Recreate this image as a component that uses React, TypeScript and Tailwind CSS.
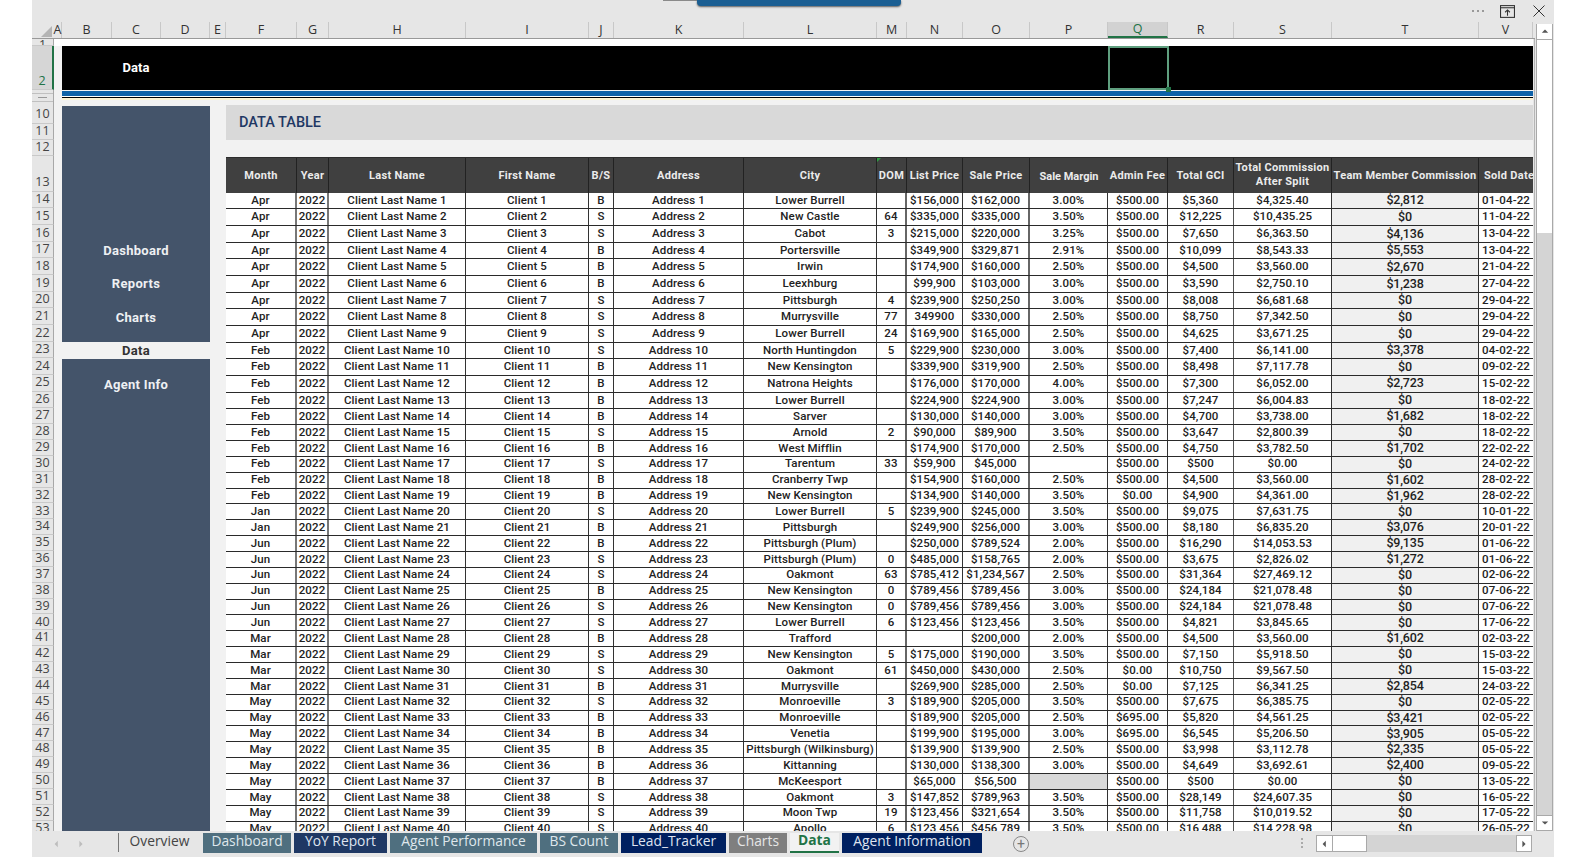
const COLUMNS = [
  { label: 'A', w: 'w-[8px]' },
  { label: 'B', w: 'w-[50px]' },
  { label: 'C', w: 'w-[49px]' },
  { label: 'D', w: 'w-[49px]' },
  { label: 'E', w: 'w-[16px]' },
  { label: 'F', w: 'w-[71px]' },
  { label: 'G', w: 'w-[32px]' },
  { label: 'H', w: 'w-[137px]' },
  { label: 'I', w: 'w-[123px]' },
  { label: 'J', w: 'w-[25px]' },
  { label: 'K', w: 'w-[130px]' },
  { label: 'L', w: 'w-[133px]' },
  { label: 'M', w: 'w-[30px]' },
  { label: 'N', w: 'w-[56px]' },
  { label: 'O', w: 'w-[67px]' },
  { label: 'P', w: 'w-[78px]' },
  { label: 'Q', w: 'w-[60px]' },
  { label: 'R', w: 'w-[66px]' },
  { label: 'S', w: 'w-[98px]' },
  { label: 'T', w: 'w-[147px]' },
  { label: 'V', w: 'w-[54px]' },
]

const ROW_GRID = 'grid grid-cols-[71px_32px_137px_123px_25px_130px_133px_30px_56px_67px_78px_60px_66px_98px_147px_54px]'

// right border of each table column, the gray ones are the doubled lines in the sheet
const CELL_LINES = [
  'border-r-2 border-[#777]',
  'border-r-2 border-[#777]',
  'border-r border-[#333]',
  'border-r border-[#333]',
  'border-r border-[#333]',
  'border-r border-[#333]',
  'border-r border-[#333]',
  'border-r-2 border-[#666]',
  'border-r border-[#333]',
  'border-r-2 border-[#666]',
  'border-r border-[#333]',
  'border-r border-[#333]',
  'border-r border-[#555]',
  'border-r border-[#333]',
  'border-r border-[#333]',
  '',
]

const HEADERS = ['Month', 'Year', 'Last Name', 'First Name', 'B/S', 'Address', 'City', 'DOM', 'List Price', 'Sale Price', 'Sale Margin', 'Admin Fee', 'Total GCI', 'Total Commission', 'Team Member Commission', 'Sold Date']

// month, b/s, city, dom, list, sale, margin, admin, gci, after split, team, date
const ROWS: string[][] = [
  ['Apr', 'B', 'Lower Burrell', '', '$156,000', '$162,000', '3.00%', '$500.00', '$5,360', '$4,325.40', '$2,812', '01-04-22'],
  ['Apr', 'S', 'New Castle', '64', '$335,000', '$335,000', '3.50%', '$500.00', '$12,225', '$10,435.25', '$0', '11-04-22'],
  ['Apr', 'S', 'Cabot', '3', '$215,000', '$220,000', '3.25%', '$500.00', '$7,650', '$6,363.50', '$4,136', '13-04-22'],
  ['Apr', 'B', 'Portersville', '', '$349,900', '$329,871', '2.91%', '$500.00', '$10,099', '$8,543.33', '$5,553', '13-04-22'],
  ['Apr', 'B', 'Irwin', '', '$174,900', '$160,000', '2.50%', '$500.00', '$4,500', '$3,560.00', '$2,670', '21-04-22'],
  ['Apr', 'B', 'Leexhburg', '', '$99,900', '$103,000', '3.00%', '$500.00', '$3,590', '$2,750.10', '$1,238', '27-04-22'],
  ['Apr', 'S', 'Pittsburgh', '4', '$239,900', '$250,250', '3.00%', '$500.00', '$8,008', '$6,681.68', '$0', '29-04-22'],
  ['Apr', 'S', 'Murrysville', '77', '349900', '$330,000', '2.50%', '$500.00', '$8,750', '$7,342.50', '$0', '29-04-22'],
  ['Apr', 'S', 'Lower Burrell', '24', '$169,900', '$165,000', '2.50%', '$500.00', '$4,625', '$3,671.25', '$0', '29-04-22'],
  ['Feb', 'S', 'North Huntingdon', '5', '$229,900', '$230,000', '3.00%', '$500.00', '$7,400', '$6,141.00', '$3,378', '04-02-22'],
  ['Feb', 'B', 'New Kensington', '', '$339,900', '$319,900', '2.50%', '$500.00', '$8,498', '$7,117.78', '$0', '09-02-22'],
  ['Feb', 'B', 'Natrona Heights', '', '$176,000', '$170,000', '4.00%', '$500.00', '$7,300', '$6,052.00', '$2,723', '15-02-22'],
  ['Feb', 'B', 'Lower Burrell', '', '$224,900', '$224,900', '3.00%', '$500.00', '$7,247', '$6,004.83', '$0', '18-02-22'],
  ['Feb', 'B', 'Sarver', '', '$130,000', '$140,000', '3.00%', '$500.00', '$4,700', '$3,738.00', '$1,682', '18-02-22'],
  ['Feb', 'S', 'Arnold', '2', '$90,000', '$89,900', '3.50%', '$500.00', '$3,647', '$2,800.39', '$0', '18-02-22'],
  ['Feb', 'B', 'West Mifflin', '', '$174,900', '$170,000', '2.50%', '$500.00', '$4,750', '$3,782.50', '$1,702', '22-02-22'],
  ['Feb', 'S', 'Tarentum', '33', '$59,900', '$45,000', '', '$500.00', '$500', '$0.00', '$0', '24-02-22'],
  ['Feb', 'B', 'Cranberry Twp', '', '$154,900', '$160,000', '2.50%', '$500.00', '$4,500', '$3,560.00', '$1,602', '28-02-22'],
  ['Feb', 'B', 'New Kensington', '', '$134,900', '$140,000', '3.50%', '$0.00', '$4,900', '$4,361.00', '$1,962', '28-02-22'],
  ['Jan', 'S', 'Lower Burrell', '5', '$239,900', '$245,000', '3.50%', '$500.00', '$9,075', '$7,631.75', '$0', '10-01-22'],
  ['Jan', 'B', 'Pittsburgh', '', '$249,900', '$256,000', '3.00%', '$500.00', '$8,180', '$6,835.20', '$3,076', '20-01-22'],
  ['Jun', 'B', 'Pittsburgh (Plum)', '', '$250,000', '$789,524', '2.00%', '$500.00', '$16,290', '$14,053.53', '$9,135', '01-06-22'],
  ['Jun', 'S', 'Pittsburgh (Plum)', '0', '$485,000', '$158,765', '2.00%', '$500.00', '$3,675', '$2,826.02', '$1,272', '01-06-22'],
  ['Jun', 'S', 'Oakmont', '63', '$785,412', '$1,234,567', '2.50%', '$500.00', '$31,364', '$27,469.12', '$0', '02-06-22'],
  ['Jun', 'B', 'New Kensington', '0', '$789,456', '$789,456', '3.00%', '$500.00', '$24,184', '$21,078.48', '$0', '07-06-22'],
  ['Jun', 'S', 'New Kensington', '0', '$789,456', '$789,456', '3.00%', '$500.00', '$24,184', '$21,078.48', '$0', '07-06-22'],
  ['Jun', 'S', 'Lower Burrell', '6', '$123,456', '$123,456', '3.50%', '$500.00', '$4,821', '$3,845.65', '$0', '17-06-22'],
  ['Mar', 'B', 'Trafford', '', '', '$200,000', '2.00%', '$500.00', '$4,500', '$3,560.00', '$1,602', '02-03-22'],
  ['Mar', 'S', 'New Kensington', '5', '$175,000', '$190,000', '3.50%', '$500.00', '$7,150', '$5,918.50', '$0', '15-03-22'],
  ['Mar', 'S', 'Oakmont', '61', '$450,000', '$430,000', '2.50%', '$0.00', '$10,750', '$9,567.50', '$0', '15-03-22'],
  ['Mar', 'B', 'Murrysville', '', '$269,900', '$285,000', '2.50%', '$0.00', '$7,125', '$6,341.25', '$2,854', '24-03-22'],
  ['May', 'S', 'Monroeville', '3', '$189,900', '$205,000', '3.50%', '$500.00', '$7,675', '$6,385.75', '$0', '02-05-22'],
  ['May', 'B', 'Monroeville', '', '$189,900', '$205,000', '2.50%', '$695.00', '$5,820', '$4,561.25', '$3,421', '02-05-22'],
  ['May', 'B', 'Venetia', '', '$199,900', '$195,000', '3.00%', '$695.00', '$6,545', '$5,206.50', '$3,905', '05-05-22'],
  ['May', 'B', 'Pittsburgh (Wilkinsburg)', '', '$139,900', '$139,900', '2.50%', '$500.00', '$3,998', '$3,112.78', '$2,335', '05-05-22'],
  ['May', 'B', 'Kittanning', '', '$130,000', '$138,300', '3.00%', '$500.00', '$4,649', '$3,692.61', '$2,400', '09-05-22'],
  ['May', 'B', 'McKeesport', '', '$65,000', '$56,500', 'blank', '$500.00', '$500', '$0.00', '$0', '13-05-22'],
  ['May', 'S', 'Oakmont', '3', '$147,852', '$789,963', '3.50%', '$500.00', '$28,149', '$24,607.35', '$0', '16-05-22'],
  ['May', 'S', 'Moon Twp', '19', '$123,456', '$321,654', '3.50%', '$500.00', '$11,758', '$10,019.52', '$0', '17-05-22'],
  ['May', 'S', 'Apollo', '6', '$123,456', '$456,789', '3.50%', '$500.00', '$16,488', '$14,228.98', '$0', '26-05-22'],
]

const TABS = [
  { name: 'Overview', cls: 'w-[81px] text-[#444]' },
  { name: 'Dashboard', cls: 'w-[88px] bg-[#4f6f7f] text-[#dfe7ec]' },
  { name: 'YoY Report', cls: 'w-[93px] bg-[#1f3864] text-[#dfe4f0]' },
  { name: 'Agent Performance', cls: 'w-[147px] bg-[#4f6f7f] text-[#dfe7ec]' },
  { name: 'BS Count', cls: 'w-[78px] bg-[#4f6f7f] text-[#dfe7ec]' },
  { name: 'Lead_Tracker', cls: 'w-[105px] bg-[#002060] text-[#dfe4f0]' },
  { name: 'Charts', cls: 'w-[58px] bg-[#7f7f7f] text-[#e6e6e6]' },
  { name: 'Data', cls: 'w-[49px] bg-[#f2f2f2] text-[#217346] font-bold border-b-2 border-[#217346]' },
  { name: 'Agent Information', cls: 'w-[140px] bg-[#002060] text-[#dfe4f0]' },
]

function Arrow({ dir, color = '#555' }: { dir: 'up' | 'down' | 'left' | 'right'; color?: string }) {
  const points = {
    up: '1,6 5,2 9,6',
    down: '1,3 5,7 9,3',
    left: '6,1 2,5 6,9',
    right: '3,1 7,5 3,9',
  }[dir]
  return (
    <svg viewBox="0 0 10 10" className="w-[8px] h-[8px]">
      <polygon points={points} fill={color} />
    </svg>
  )
}

function TopBar() {
  return (
    <div className="h-[22px] flex items-start shrink-0">
      <div className="ml-[631px] w-[34px] h-[1px] bg-[#8a8a8a]" />
      <div className="w-[204px] h-[6px] bg-[#1b5f93] rounded-b-[4px] shadow-[0_1px_2px_rgba(0,0,0,0.6)]" />
      <div className="ml-auto flex items-center h-[22px] text-[#555]">
        <div className="flex gap-[3px] mr-[16px]">
          <span className="w-[2px] h-[2px] bg-[#999]" />
          <span className="w-[2px] h-[2px] bg-[#999]" />
          <span className="w-[2px] h-[2px] bg-[#999]" />
        </div>
        <svg viewBox="0 0 14 12" className="w-[15px] h-[13px] mr-[18px]" fill="none" stroke="#333">
          <rect x="0.5" y="0.5" width="13" height="11" />
          <path d="M0.5 2.5H13.5" />
          <path d="M7 10V4.5M4.8 6.7L7 4.5L9.2 6.7" />
        </svg>
        <svg viewBox="0 0 12 12" className="w-[12px] h-[12px] mr-[9px]" fill="none" stroke="#333">
          <path d="M0.5 0.5L11.5 11.5M11.5 0.5L0.5 11.5" />
        </svg>
      </div>
    </div>
  )
}

function ColumnHeader() {
  return (
    <div className="h-[16.5px] flex shrink-0 border-b border-[#999] text-[12.5px] text-[#333] font-['Open_Sans',sans-serif] leading-none">
      <div className="w-[22px] flex justify-end items-end pr-[2px] pb-[1px]">
        <div className="w-0 h-0 border-l-[11px] border-l-transparent border-b-[11px] border-b-[#b4b4b4]" />
      </div>
      {COLUMNS.map(c => (
        <div
          key={c.label}
          className={`${c.w} shrink-0 flex items-center justify-center border-r border-[#c8c8c8] ${c.label === 'Q' ? 'bg-[#d2d2d2] text-[#217346] border-b-2 border-b-[#217346]' : ''}`}
        >
          {c.label}
        </div>
      ))}
    </div>
  )
}

function RowHeader({ label, h, align = 'items-center', active = false }: { label: string; h: string; align?: string; active?: boolean }) {
  return (
    <div className={`${h} flex justify-center ${align} overflow-hidden shrink-0 border-b border-[#c9c9c9] border-r ${active ? 'border-r-2 border-r-[#217346] text-[#217346] bg-[#d6d6d6]' : 'border-r-[#a8a8a8]'}`}>
      {label}
    </div>
  )
}

function RowHeaders() {
  return (
    <div className="w-[22px] shrink-0 text-[12.5px] leading-none text-[#444] font-['Open_Sans',sans-serif]">
      <RowHeader label="1" h="h-[7.5px]" align="items-start" />
      <RowHeader label="2" h="h-[44px]" align="items-end pb-[2px]" active />
      <div className="h-[15px] border-r border-[#a8a8a8] flex flex-col justify-center gap-[3px]">
        <div className="h-[1px] bg-[#c0c0c0]" />
        <div className="h-[1px] bg-[#999] mx-[6px]" />
        <div className="h-[1px] bg-[#c0c0c0]" />
      </div>
      <RowHeader label="10" h="h-[19px]" />
      <RowHeader label="11" h="h-[16px]" />
      <RowHeader label="12" h="h-[16px]" />
      <RowHeader label="13" h="h-[35.7px]" align="items-end pb-[2px]" />
      {ROWS.map((_, i) => (
        <RowHeader key={i} label={String(i + 14)} h={i < 13 ? 'h-[16.67px]' : 'h-[15.87px]'} />
      ))}
    </div>
  )
}

function SideNav() {
  return (
    <div className="w-[148px] shrink-0 mt-[1px] flex flex-col text-[13px] font-bold tracking-[0.3px]">
      <div className="h-[236px] bg-[#44546a] text-[#eef0f3] pt-[128px] shrink-0">
        <div className="h-[33.33px] flex items-center justify-center">Dashboard</div>
        <div className="h-[33.33px] flex items-center justify-center">Reports</div>
        <div className="h-[33.33px] flex items-center justify-center">Charts</div>
      </div>
      <div className="h-[16.67px] flex items-center justify-center text-[#333] shrink-0">Data</div>
      <div className="flex-1 bg-[#44546a] text-[#eef0f3] pt-[9px]">
        <div className="h-[33.33px] flex items-center justify-center">Agent Info</div>
      </div>
    </div>
  )
}

function DataTable() {
  return (
    <div className="w-[1307px] text-[11.5px] font-medium text-[#222] tracking-[0.1px] leading-none">
      <div className={`${ROW_GRID} h-[35.7px] bg-[#404040] text-[#ebebeb] font-bold tracking-[0.3px] text-[11px] border-t border-[#2c2c2c]`}>
        {HEADERS.map((h, i) => (
          <div
            key={h}
            className={`relative flex items-center justify-center text-center whitespace-nowrap overflow-hidden ${i === 10 ? 'pt-[2px] tracking-normal' : ''} ${i === 15 ? 'justify-start pl-[5px]' : ''} ${i === 10 || i === 15 ? '' : 'border-r border-[#222]'}`}
          >
            {i === 7 && <span className="absolute left-0 top-0 w-0 h-0 border-t-[4px] border-t-[#2f9e44] border-r-[4px] border-r-transparent" />}
            {i === 13 ? (
              <span className="leading-[14px]">
                {h}
                <br />
                After Split
              </span>
            ) : (
              h
            )}
          </div>
        ))}
      </div>
      {ROWS.map((r, i) => {
        const n = i + 1
        const cells = [r[0], '2022', `Client Last Name ${n}`, `Client ${n}`, r[1], `Address ${n}`, r[2], r[3], r[4], r[5], r[6], r[7], r[8], r[9], r[10], r[11]]
        return (
          <div key={n} className={`${ROW_GRID} ${i < 13 ? 'h-[16.67px]' : 'h-[15.87px]'} bg-white border-b border-[#2a2a2a]`}>
            {cells.map((c, j) => (
              <div
                key={j}
                className={`flex items-center justify-center whitespace-nowrap overflow-hidden ${CELL_LINES[j]} ${j === 14 ? 'bg-[#f0f0f0] text-[12.5px] tracking-[-0.2px]' : ''} ${c === 'blank' ? 'bg-[#d9d9d9]' : ''}`}
              >
                {c === 'blank' ? '' : c}
              </div>
            ))}
          </div>
        )
      })}
    </div>
  )
}

function Pane() {
  return (
    <div className="w-[1479px] shrink-0 pl-[8px] bg-[#f2f2f2] overflow-hidden">
      <div className="h-[7.5px] bg-white -ml-[8px]" />
      <div className="relative h-[44px] bg-black flex items-center">
        <div className="w-[148px] text-center text-white text-[13px] font-bold">Data</div>
        <div className="absolute left-[1046px] top-[0px] w-[61px] h-[44px] border-2 border-[#5f9f7f]" />
        <div className="absolute left-[1104px] top-[41px] w-[5px] h-[5px] bg-[#217346]" />
      </div>
      <div className="h-[5px] bg-[#0f62a8] mt-[1px]" />
      <div className="h-[1px] bg-white" />
      <div className="h-[1px] bg-black" />
      <div className="h-[2px] bg-[#fdf3d4]" />
      <div className="h-[5px]" />
      <div className="flex">
        <SideNav />
        <div className="w-[16px] shrink-0" />
        <div>
          <div className="h-[35px] bg-[#d9d9d9] flex items-center pl-[13px] pt-[1px] text-[14.5px] font-medium text-[#1f3864]">DATA TABLE</div>
          <div className="h-[17px]" />
          <DataTable />
        </div>
      </div>
    </div>
  )
}

function VerticalScroll() {
  return (
    <div className="w-[19px] shrink-0 pt-[2px] pl-[1px] flex flex-col h-full">
      <div className="w-[17px] flex-1 flex flex-col border-x border-[#a9a9a9] bg-[#d4d4d4]">
        <div className="h-[16px] bg-white border-b border-[#a9a9a9] flex items-center justify-center"><Arrow dir="up" /></div>
        <div className="h-[193px] bg-white" />
        <div className="flex-1" />
        <div className="h-[16px] bg-white border-y border-[#a9a9a9] flex items-center justify-center"><Arrow dir="down" /></div>
      </div>
    </div>
  )
}

function BottomBar() {
  return (
    <div className="h-[26px] flex items-start shrink-0">
      <div className="w-[86px] flex items-center h-[26px] pl-[21px] gap-[16px] shrink-0">
        <Arrow dir="left" color="#bdbdbd" />
        <Arrow dir="right" color="#bdbdbd" />
      </div>
      <div className="h-[19px] w-[1px] bg-[#777] mt-[2px] shrink-0" />
      <div className="flex gap-[3px] mt-[2px] text-[13.8px] leading-none font-['Open_Sans',sans-serif] shrink-0">
        {TABS.map(t => (
          <div key={t.name} className={`${t.cls} h-[20px] pb-[4px] flex items-center justify-center whitespace-nowrap shrink-0`}>{t.name}</div>
        ))}
      </div>
      <div className="ml-[31px] mt-[5px] w-[16px] h-[16px] rounded-full border border-[#888] flex items-center justify-center text-[#777] text-[14px] leading-none shrink-0">+</div>
      <div className="ml-[272px] mt-[7px] flex flex-col gap-[2px] shrink-0">
        <span className="w-[2px] h-[2px] bg-[#aaa]" />
        <span className="w-[2px] h-[2px] bg-[#aaa]" />
        <span className="w-[2px] h-[2px] bg-[#aaa]" />
      </div>
      <div className="ml-[13px] mt-[4px] w-[216px] h-[17px] flex bg-[#d4d4d4] shrink-0">
        <div className="w-[17px] bg-white border border-[#a9a9a9] flex items-center justify-center"><Arrow dir="left" /></div>
        <div className="w-[34px] bg-white border-y border-r border-[#a9a9a9]" />
        <div className="flex-1" />
        <div className="w-[16px] bg-white border border-[#a9a9a9] flex items-center justify-center"><Arrow dir="right" /></div>
      </div>
    </div>
  )
}

export default function App() {
  return (
    <div className="w-[1588px] h-[857px] bg-white overflow-hidden font-['Roboto',sans-serif]">
      <div className="ml-[32px] w-[1522px] h-full bg-[#e6e6e6] flex flex-col">
        <TopBar />
        <div className="flex h-[809px] shrink-0">
          <div className="w-[1503px] shrink-0 flex flex-col overflow-hidden">
            <ColumnHeader />
            <div className="flex flex-1 min-h-0 overflow-hidden">
              <RowHeaders />
              <Pane />
              <div className="w-[1px] bg-[#b5b5b5] shrink-0 ml-[1px]" />
            </div>
          </div>
          <VerticalScroll />
        </div>
        <BottomBar />
      </div>
    </div>
  )
}
